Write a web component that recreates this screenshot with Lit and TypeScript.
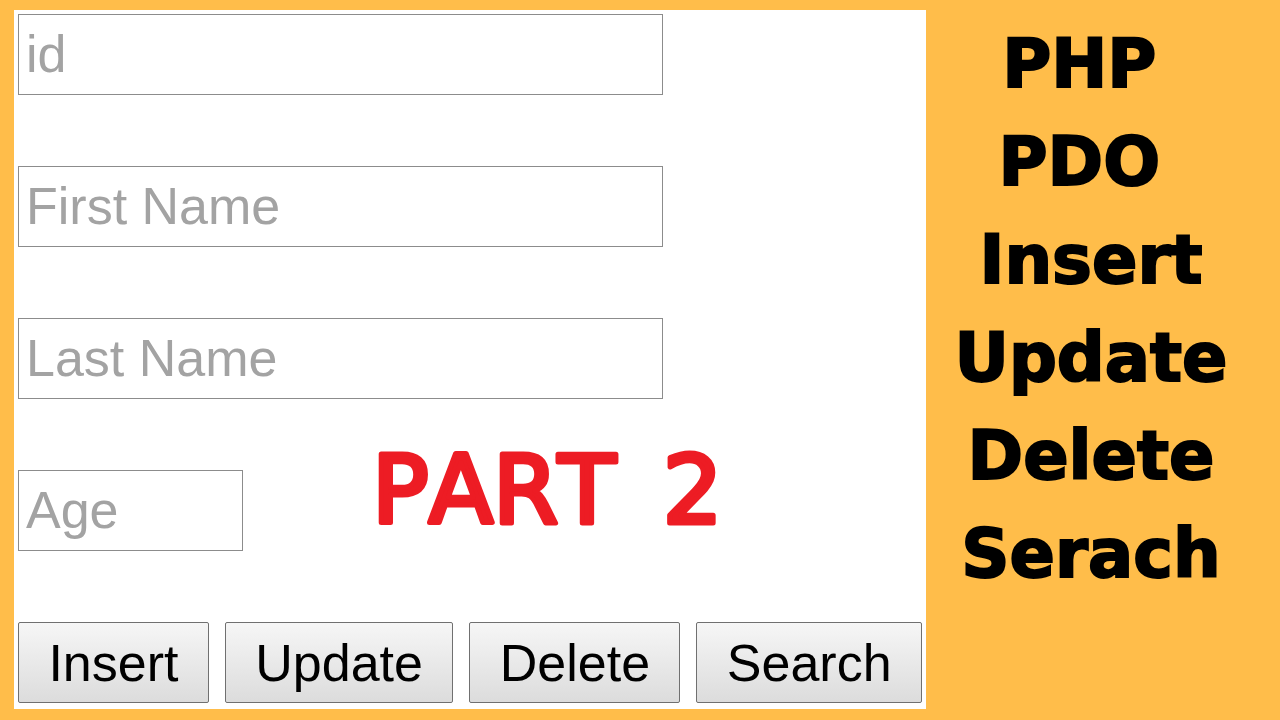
import { LitElement, html, css } from "lit";
import { customElement } from "lit/decorators.js";

const TOPICS = ["PHP\u00a0", "PDO\u00a0", "Insert", "Update", "Delete", "Serach"];
const ACTIONS = ["Insert", "Update", "Delete", "Search"];

@customElement("app-root")
export class AppRoot extends LitElement {
  static styles = css`
    :host {
      display: block;
      font-family: "Liberation Sans", Arial, sans-serif;
    }
    * {
      box-sizing: border-box;
    }
    .page {
      display: grid;
      grid-template-columns: minmax(0, 1fr) 330px;
      align-items: start;
      min-height: 100vh;
      padding: 10px 24px 10px 14px;
      background: #ffbd4a;
    }
    .panel {
      display: flex;
      flex-direction: column;
      gap: 71px;
      padding: 4px 4px 6px;
      background: #fff;
    }
    .field {
      display: block;
      width: 645px;
      max-width: 100%;
      height: 81px;
      margin: 0;
      padding: 0 7px 2px;
      border: 1px solid #8c8c8c;
      border-radius: 0;
      background: #fff;
      color: #000;
      font: 52px "Liberation Sans", Arial, sans-serif;
    }
    .field::placeholder {
      color: #a3a3a3;
      opacity: 1;
    }
    .short {
      width: 225px;
    }
    .row {
      display: flex;
      gap: 124px;
    }
    .part {
      width: 380px;
      height: 81px;
      overflow: visible;
    }
    .part-text {
      font-family: "DejaVu Sans", sans-serif;
      font-size: 94px;
      font-kerning: none;
      fill: #ed1c24;
      stroke: #ed1c24;
      stroke-width: 5px;
      stroke-linejoin: round;
    }
    .actions {
      display: flex;
      gap: 16px;
    }
    .action {
      flex: 1 1 auto;
      height: 81px;
      margin: 0;
      padding: 0 29px;
      border: 1px solid #707070;
      border-radius: 2px;
      background: linear-gradient(#f6f6f6, #dcdcdc);
      color: #000;
      font: 52px "Liberation Sans", Arial, sans-serif;
    }
    .topics {
      margin: 0;
      padding: 5px 0 0;
      list-style: none;
      text-align: center;
      font: bold 67px/98px "DejaVu Sans", sans-serif;
      color: #000;
      -webkit-text-stroke: 2px #000;
    }
  `;

  render() {
    return html`
      <main class="page">
        <form class="panel" @submit=${(e: Event) => e.preventDefault()}>
          <input class="field" name="id" placeholder="id" aria-label="id" />
          <input class="field" name="fname" placeholder="First Name" aria-label="First Name" />
          <input class="field" name="lname" placeholder="Last Name" aria-label="Last Name" />
          <div class="row">
            <input class="field short" name="age" placeholder="Age" aria-label="Age" />
            <svg class="part" role="img" aria-label="PART 2">
              <text class="part-text" x="5" y="53">PART&ensp;2</text>
            </svg>
          </div>
          <div class="actions">
            ${ACTIONS.map((a) => html`<button class="action" type="submit">${a}</button>`)}
          </div>
        </form>
        <ul class="topics">
          ${TOPICS.map((t) => html`<li>${t}</li>`)}
        </ul>
      </main>
    `;
  }
}
